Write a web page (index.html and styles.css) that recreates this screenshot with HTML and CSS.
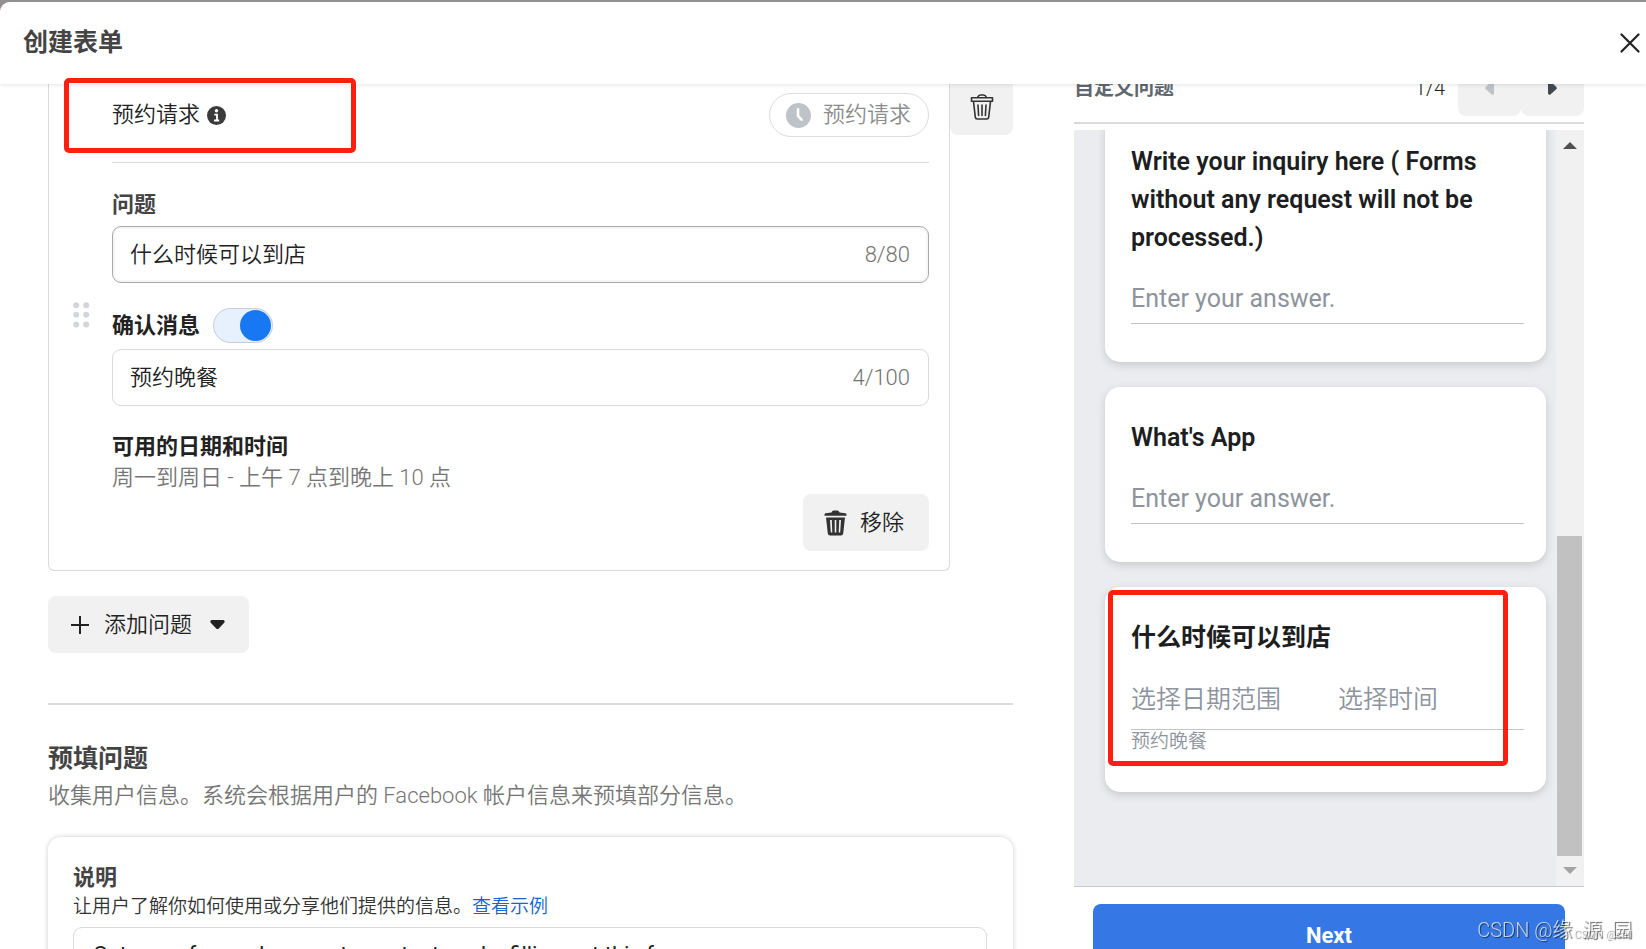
FILE: index.html
```html
<!DOCTYPE html>
<html lang="zh-CN">
<head>
    <meta charset="UTF-8">
    <meta name="viewport" content="width=device-width, initial-scale=1.0">
    <title>创建表单</title>
    <link rel="stylesheet" href="styles.css">
</head>
<body>
    <div class="dialog">
        <header class="dialog-header">
            <h1>创建表单</h1>
            <button class="close" aria-label="关闭">
                <svg width="20" height="20" viewBox="0 0 20 20"><path d="M1.500 1.500l17 17M18.500 1.500l-17 17" stroke="#222" stroke-width="2.200" stroke-linecap="round"/></svg>
            </button>
        </header>

        <main>
            <div class="editor">
                <div class="question">
                    <section class="question-card">
                        <svg class="drag" width="17" height="26" viewBox="0 0 17 26" fill="#d3d5da">
                            <circle cx="3.200" cy="3.200" r="3"/><circle cx="13.200" cy="3.200" r="3"/>
                            <circle cx="3.200" cy="12.800" r="3"/><circle cx="13.200" cy="12.800" r="3"/>
                            <circle cx="3.200" cy="22.400" r="3"/><circle cx="13.200" cy="22.400" r="3"/>
                        </svg>
                        <div class="type-row">
                            <span>预约请求</span>
                            <svg width="19" height="19" viewBox="0 0 19 19">
                                <circle cx="9.500" cy="9.500" r="9.500" fill="#3b3b3b"/>
                                <circle cx="9.500" cy="4.800" r="1.700" fill="#fff"/>
                                <path d="M7.300 8.600h2.700v5.600M7 14.500h5.200" stroke="#fff" stroke-width="1.900" fill="none"/>
                            </svg>
                            <span class="pill">
                                <svg width="25" height="25" viewBox="0 0 25 25"><circle cx="12.500" cy="12.500" r="12.500" fill="#bec3c9"/><path d="M12 6.200v6.800l3.500 3.700" stroke="#fff" stroke-width="2.600" stroke-linecap="round" stroke-linejoin="round" fill="none"/></svg>
                                预约请求
                            </span>
                            <div class="mark mark-type"></div>
                        </div>

                        <label class="field-label soft" for="question">问题</label>
                        <div class="text-field active">
                            <input type="text" id="question" value="什么时候可以到店">
                            <span class="count">8/80</span>
                        </div>

                        <div class="toggle-row">
                            <label class="field-label" for="confirm-toggle">确认消息</label>
                            <input type="checkbox" class="toggle" id="confirm-toggle" checked>
                        </div>
                        <div class="text-field">
                            <input type="text" aria-label="确认消息内容" value="预约晚餐">
                            <span class="count">4/100</span>
                        </div>

                        <h3 class="field-label">可用的日期和时间</h3>
                        <p class="hours">周一到周日 - 上午 7 点到晚上 10 点</p>
                        <button class="btn remove">
                            <svg width="23" height="26" viewBox="0 0 23 26" fill="#333">
                                <path d="M7.500 2.600Q8 .5 10 .5h3q2 0 2.500 2.100l6 .7q1 .2 1 1.200v1.200H.5V4.500q0-1 1-1.200z"/>
                                <path fill-rule="evenodd" d="M2 7.500h19L19.200 23.500q-.3 2-2.200 2H6q-1.900 0-2.200-2zM6 10l.8 12.500h1.500L7.800 10zM10.700 10v12.500h1.600V10zM15.200 10l-.5 12.500h1.500L17 10z"/>
                            </svg>
                            移除
                        </button>
                    </section>
                    <button class="btn delete" aria-label="删除问题">
                        <svg width="24" height="26" viewBox="0 0 24 26" fill="none" stroke="#333" stroke-width="1.600" stroke-linejoin="round" stroke-linecap="round">
                            <path d="M7.500 3.500Q8.500 1 10.500 1h3Q15.500 1 16.500 3.500M1.500 3.700h21v3.600h-21zM3.500 7.500l1.800 15.700q.2 1.800 2 1.800h9.400q1.800 0 2-1.800L20.500 7.500M8 11l.6 10.500M12 11v10.500M16 11l-.6 10.500"/>
                        </svg>
                    </button>
                </div>

                <button class="btn add">
                    <svg width="18" height="18" viewBox="0 0 18 18"><path d="M9 0v18M0 9h18" stroke="#222" stroke-width="2"/></svg>
                    添加问题
                    <svg class="caret" width="15" height="9" viewBox="0 0 15 9"><path d="M1.500 0h12Q15.500 1 14.200 2.700L8.800 8.400Q7.500 9.500 6.200 8.400L.8 2.700Q-.5 1 1.500 0z" fill="#222"/></svg>
                </button>

                <hr>

                <h2>预填问题</h2>
                <p class="prefill-text">收集用户信息。系统会根据用户的 Facebook 帐户信息来预填部分信息。</p>

                <section class="description-card">
                    <label class="field-label soft" for="description">说明</label>
                    <p>让用户了解你如何使用或分享他们提供的信息。<a href="#example">查看示例</a></p>
                    <textarea id="description" rows="3">Get more for our houses, to contact me by filling out this form</textarea>
                </section>
            </div>

            <aside class="preview">
                <div class="preview-header">
                    <h2>自定义问题</h2>
                    <span>1/4</span>
                    <div class="pager">
                        <button class="btn" aria-label="上一页" disabled><svg width="9" height="14" viewBox="0 0 9 14"><path d="M9 1.500v11Q8 14.500 6.300 13.200L.8 8.300Q-.4 7 .8 5.700L6.300 .8Q8-.5 9 1.500z" fill="#bec3c9"/></svg></button>
                        <button class="btn" aria-label="下一页"><svg width="9" height="14" viewBox="0 0 9 14"><path d="M0 1.500v11Q1 14.500 2.700 13.200L8.200 8.300Q9.400 7 8.200 5.700L2.700 .8Q1-.5 0 1.500z" fill="#444950"/></svg></button>
                    </div>
                </div>

                <div class="phone">
                    <div class="phone-content">
                        <div class="phone-card">
                            <label for="inquiry">Write your inquiry here ( Forms without any request will not be processed.)</label>
                            <input type="text" id="inquiry" placeholder="Enter your answer.">
                        </div>
                        <div class="phone-card">
                            <label for="whatsapp">What's App</label>
                            <input type="text" id="whatsapp" placeholder="Enter your answer.">
                        </div>
                        <div class="phone-card">
                            <label for="visit-date">什么时候可以到店</label>
                            <div class="date-time">
                                <input type="text" id="visit-date" placeholder="选择日期范围">
                                <input type="text" aria-label="选择时间" placeholder="选择时间">
                            </div>
                            <small>预约晚餐</small>
                            <div class="mark mark-visit"></div>
                        </div>
                    </div>
                    <div class="scrollbar">
                        <span class="arrow-up"></span>
                        <span class="thumb"></span>
                        <span class="arrow-down"></span>
                    </div>
                </div>

                <button class="next">Next</button>
            </aside>
        </main>
    </div>

    <div class="watermark">CSDN @缘&nbsp; 源&nbsp; 园</div>
    <div class="watermark small">CSDN @still</div>
</body>
</html>
```

FILE: styles.css
```css
* {
    box-sizing: border-box;
}
body {
    margin: 0;
    padding-top: 2px;
    height: 100vh;
    overflow: hidden;
    background-color: #929090;
    font-family: Roboto, "Noto Sans CJK SC", sans-serif;
    font-size: 22px;
    font-weight: 350;
    line-height: 30px;
    color: #222;
}
h1, h2, h3, p {
    margin: 0;
}
button, input, textarea {
    font: inherit;
    color: inherit;
}
button {
    border: none;
    padding: 0;
    cursor: pointer;
}
svg {
    flex: none;
    display: block;
}

/* Dialog */
.dialog {
    height: 100%;
    background-color: #fff;
    border-top-left-radius: 10px;
    overflow: hidden;
}
.dialog-header {
    position: relative;
    z-index: 1;
    height: 82px;
    padding: 0 6px 0 23px;
    display: flex;
    align-items: center;
    justify-content: space-between;
    background-color: #fff;
    box-shadow: 0 0 5px rgba(0, 0, 0, 0.15);
}
.dialog-header h1 {
    font-size: 25px;
    font-weight: 700;
    color: #444;
}
.close {
    background: none;
}
main {
    display: grid;
    grid-template-columns: 1fr 510px;
    gap: 61px;
    padding: 0 62px 0 48px;
}

/* Shared controls */
.btn {
    height: 57px;
    display: flex;
    align-items: center;
    justify-content: center;
    background-color: #f1f1f1;
    border-radius: 8px;
}
.field-label {
    display: block;
    font-size: 22px;
    font-weight: 700;
    line-height: 30px;
}
.soft {
    color: #444;
}
.text-field {
    height: 57px;
    margin-top: 6px;
    padding: 0 18px 0 17px;
    display: flex;
    align-items: center;
    border: 1px solid #dadada;
    border-radius: 9px;
}
.text-field.active {
    border-color: #aaa;
    box-shadow: inset 0 0 0 2px #f6f6f6;
}
.text-field input {
    flex: 1;
    min-width: 0;
    height: 30px;
    padding: 0;
    border: none;
    outline: none;
    background: none;
}
.count {
    color: #737373;
}
.mark {
    position: absolute;
    z-index: 2;
    border: 5px solid #ff1f10;
    border-radius: 5px;
    pointer-events: none;
}

/* Question editor */
.question {
    display: grid;
    grid-template-columns: 1fr 63px;
    align-items: start;
}
.question-card {
    position: relative;
    padding: 9px 20px 19px 63px;
    border: 1px solid #dadada;
    border-top: none;
    border-radius: 0 0 6px 6px;
}
.drag {
    position: absolute;
    left: 24px;
    top: 218px;
}
.type-row {
    position: relative;
    display: flex;
    align-items: center;
    gap: 7px;
    padding-bottom: 25px;
    margin-bottom: 27px;
    border-bottom: 1px solid #dadada;
}
.pill {
    height: 44px;
    margin-left: auto;
    padding: 0 17px 0 16px;
    display: flex;
    align-items: center;
    gap: 12px;
    border: 1px solid #dadde1;
    border-radius: 22px;
    color: #8d8d8d;
}
.mark-type {
    left: -48px;
    top: -15px;
    width: 292px;
    height: 75px;
}
.toggle-row {
    display: flex;
    align-items: center;
    gap: 13px;
    margin-top: 25px;
}
.toggle {
    appearance: none;
    width: 60px;
    height: 35px;
    margin: 0;
    padding: 1px;
    display: flex;
    justify-content: flex-end;
    border: 1px solid #c5cedb;
    border-radius: 18px;
    background-color: #e7f0fd;
}
.toggle::before {
    content: "";
    width: 31px;
    height: 31px;
    border-radius: 50%;
    background-color: #1877f2;
}
h3.field-label {
    margin-top: 26px;
}
.hours {
    line-height: 32px;
    color: #767676;
}
.remove {
    width: 126px;
    margin-left: auto;
    padding-right: 4px;
    gap: 13px;
}
.delete {
    margin-top: -6px;
}
.add {
    margin-top: 25px;
    padding: 0 24px 0 23px;
    gap: 15px;
}
.caret {
    margin-left: 3px;
}
hr {
    margin: 50px 0 38px;
    border: none;
    border-top: 2px solid #dcdcdc;
}
.editor h2 {
    font-size: 25px;
    line-height: 32px;
    color: #444;
}
.prefill-text {
    margin-top: 5px;
    line-height: 32px;
    color: #767676;
}
.description-card {
    margin-top: 25px;
    padding: 26px 26px 26px 25px;
    border-radius: 13px;
    box-shadow: 0 0 5px rgba(0, 0, 0, 0.2);
}
.description-card p {
    font-size: 19px;
    line-height: 28px;
    color: #333;
}
.description-card a {
    color: #1763cf;
    text-decoration: none;
}
.description-card textarea {
    display: block;
    width: 100%;
    margin-top: 6px;
    padding: 12px 19px;
    border: 1px solid #dadada;
    border-radius: 9px;
    resize: none;
    font-weight: 400;
}

/* Preview */
.preview-header {
    display: flex;
    align-items: center;
    margin-top: -25px;
    padding-bottom: 6px;
    border-bottom: 2px solid #dadada;
    font-size: 20px;
}
.preview-header h2 {
    font-size: 20px;
    font-weight: 700;
    color: #606770;
}
.preview-header span {
    margin: 0 13px 0 auto;
}
.pager {
    display: flex;
}
.pager .btn {
    width: 63px;
}
.phone {
    display: flex;
    height: calc(100vh - 192px);
    margin-top: 6px;
    border-bottom: 1px solid #c8ccd2;
    background-color: #ebecf0;
    font-weight: 400;
}
.phone-content {
    flex: 1;
    padding: 0 10px 0 31px;
    overflow: hidden;
}
.phone-card {
    position: relative;
    margin-bottom: 25px;
    padding: 32px 22px 38px 26px;
    border-radius: 15px;
    background-color: #fff;
    box-shadow: 0 3px 8px rgba(0, 0, 0, 0.15);
}
.phone-card:first-child {
    margin-top: -19px;
}
.phone-card label {
    display: block;
    font-size: 25px;
    line-height: 38px;
    font-weight: 600;
    color: #1c1e21;
}
.phone-card label[for="visit-date"] {
    font-weight: 700;
}
.phone-card input {
    display: block;
    width: 100%;
    height: 51px;
    margin-top: 16px;
    padding: 0;
    border: none;
    border-bottom: 1px solid #c5c5c5;
    outline: none;
    background: none;
    font-size: 25px;
}
.phone-card input::placeholder {
    color: #8d949e;
}
.date-time {
    display: grid;
    grid-template-columns: 207px 1fr;
}
.phone-card .date-time input {
    height: 57px;
    padding-bottom: 4px;
    font-weight: 350;
}
.phone-card small {
    display: block;
    font-size: 19px;
    font-weight: 350;
    line-height: 24px;
    color: #8d949e;
}
.mark-visit {
    left: 3px;
    top: 3px;
    width: 400px;
    height: 176px;
}
.scrollbar {
    width: 28px;
    padding: 12px 1px 12px 0;
    display: flex;
    flex-direction: column;
    align-items: center;
    background-color: #f1f1f1;
}
.arrow-up, .arrow-down {
    border: 7px solid transparent;
}
.arrow-up {
    border-top: none;
    border-bottom-color: #505050;
}
.arrow-down {
    border-bottom: none;
    border-top-color: #a3a3a3;
}
.thumb {
    width: 25px;
    height: 320px;
    margin: auto 0 11px;
    background-color: #c1c1c1;
}
.next {
    display: block;
    width: calc(100% - 38px);
    height: 64px;
    margin: 17px 19px 0;
    border-radius: 8px;
    background-color: #3578e5;
    color: #fff;
    font-weight: 700;
}

.watermark {
    position: fixed;
    right: 14px;
    bottom: 6px;
    font-size: 20px;
    line-height: 26px;
    color: rgba(255, 255, 255, 0.7);
    text-shadow: 1px 1px 1px rgba(0, 0, 0, 0.6);
}
.watermark.small {
    font-size: 11px;
    line-height: 16px;
}
```
